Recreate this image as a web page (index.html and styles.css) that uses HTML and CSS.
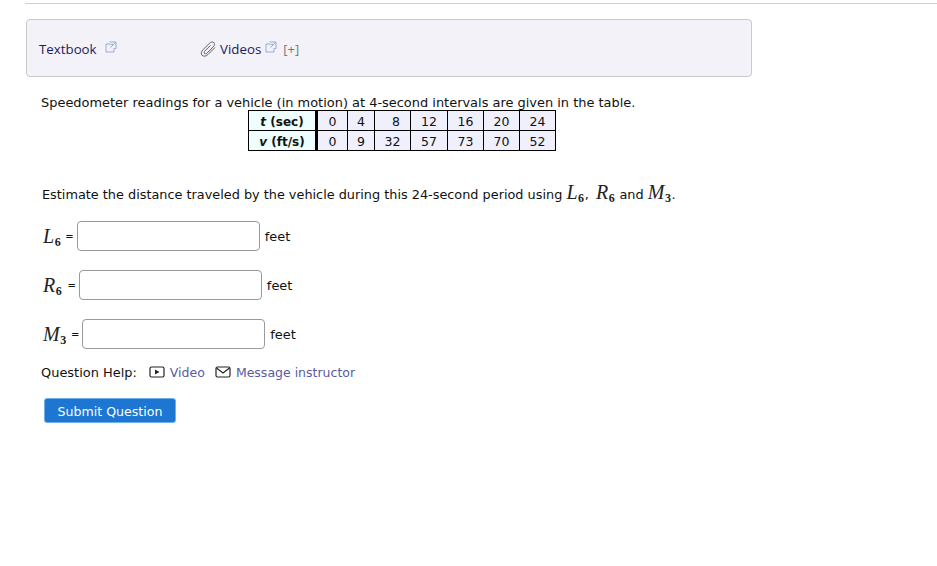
FILE: index.html
```html
<!DOCTYPE html>
<html lang="en">
<head>
<meta charset="utf-8">
<title>Question</title>
<link rel="stylesheet" href="styles.css">
</head>
<body>
<hr class="rule">
<div class="panel">
  <a class="res res-book" href="#">Textbook <svg class="ext" viewBox="0 0 12 12"><path d="M9 7v4H1V3h4M4.500 1H11v6.500H9.500M10.500 1.500L5.500 6.500M8 3.500H5.500"/></svg></a>
  <span class="res res-vid">
    <svg class="clip" viewBox="0 0 16 16"><path d="M15 6.500L8 13.500c-1.900 1.900-4.500 2.200-5.900.8S1.200 10.600 3 8.700L9.500 2.200c1.400-1.400 3.300-1.600 4.300-.6s.8 2.900-.6 4.300L7 12.100c-.8.800-1.900 1-2.500.4s-.4-1.700.4-2.500L10.500 4.400"/></svg>
    <a href="#">Videos</a>
    <svg class="ext" viewBox="0 0 12 12"><path d="M9 7v4H1V3h4M4.500 1H11v6.500H9.500M10.500 1.500L5.500 6.500M8 3.500H5.500"/></svg>
    <span class="plus">[+]</span>
  </span>
</div>
<p class="intro">Speedometer readings for a vehicle (in motion) at 4-second intervals are given in the table.</p>
<table class="data">
  <colgroup><col class="c-head"><col class="c-a"><col class="c-b"><col class="c-n"><col class="c-m"><col class="c-n"><col class="c-n"><col class="c-n"></colgroup>
  <tr><th><i>t</i> (sec)</th><td>0</td><td>4</td><td class="shift">8</td><td>12</td><td>16</td><td>20</td><td>24</td></tr>
  <tr><th><i>v</i> (ft/s)</th><td>0</td><td>9</td><td>32</td><td>57</td><td>73</td><td>70</td><td>52</td></tr>
</table>
<p class="estimate">Estimate the distance traveled by the vehicle during this 24-second period using <span class="m"><i>L</i><sub>6</sub></span>, <span class="m m-next"><i>R</i><sub>6</sub></span> and <span class="m"><i>M</i><sub>3</sub></span>.</p>
<div class="answer"><span class="m"><i>L</i><sub>6</sub></span><span class="eq">=</span><input class="box" type="text"><span>feet</span></div>
<div class="answer answer-r"><span class="m"><i>R</i><sub>6</sub></span><span class="eq">=</span><input class="box" type="text"><span>feet</span></div>
<div class="answer"><span class="m"><i>M</i><sub>3</sub></span><span class="eq">=</span><input class="box" type="text"><span>feet</span></div>
<div class="help">
  <span class="help-label">Question Help:</span>
  <svg class="ico" viewBox="0 0 16 12"><rect x="1" y="1" width="14" height="10" rx="1.500"/><path class="fill" d="M6 3.500L10.500 6 6 8.500z"/></svg>
  <a href="#">Video</a>
  <svg class="ico ico-mail" viewBox="0 0 16 12"><rect x="1" y="1" width="14" height="10" rx="1.500"/><path d="M1.500 2l6.500 5 6.500-5"/></svg>
  <a href="#">Message instructor</a>
</div>
<button class="submit" type="button">Submit Question</button>
</body>
</html>
```

FILE: styles.css
```css
html, body { margin: 0; padding: 0; background: #fff; }
body { font-family: "DejaVu Sans", sans-serif; font-size: 12.950px; color: #111; height: 566px; overflow: hidden; }
.rule { border: 0; border-top: 1px solid #d0d0d0; margin: 3px 0 0 25px; height: 0; }
.panel { display: flex; align-items: center; box-sizing: border-box; width: 726px; height: 58px; margin: 15px 0 0 26px; padding: 1px 0 0 12px; background: #f2f2f8; border: 1px solid #c9c9cf; border-radius: 4px; font-family: "Open Sans", sans-serif; font-size: 13.300px; }
.panel a { color: #1f1a5c; text-decoration: none; }
.res { display: flex; align-items: center; }
.res-book { width: 161px; gap: 8px; }
.res-vid { gap: 4px; }
.ext { width: 12px; height: 12px; margin-top: -4px; fill: none; stroke: #8fa3cc; stroke-width: .9; }
.clip { width: 16px; height: 16px; fill: none; stroke: #555; stroke-width: .9; }
.plus { color: #777; margin-left: 2px; font-size: 13px; }
.intro { margin: 18px 0 0 41px; line-height: 15px; }
.data { border-collapse: collapse; margin: 0 0 0 248px; table-layout: fixed; width: 308px; font-size: 12.500px; }
.data th, .data td { box-sizing: border-box; border: 1px solid #000; padding: 3px 0 0; height: 20px; line-height: 16px; text-align: center; background: #f0f0fd; font-weight: normal; }
.data tr + tr th, .data tr + tr td { padding-top: 2px; }
.data th { background: #eefdfd; font-weight: bold; font-size: 12px; border-right: 3px solid #000; }
.c-head { width: 68px; }
.c-a { width: 31px; }
.c-b { width: 27px; }
.c-n { width: 36px; }
.c-m { width: 37px; }
.data .shift { padding-left: 7px; }
.estimate { margin: 33px 0 0 42px; line-height: 16px; font-size: 12.850px; }
.m { font-family: "Liberation Serif", serif; font-size: 20px; letter-spacing: .6px; color: #222; }
.m-next { margin-left: 3px; }
.m sub { font-size: 12px; font-weight: bold; vertical-align: -3px; line-height: 0; font-style: normal; }
.answer { display: flex; align-items: center; height: 30px; margin: 19px 0 0 43px; gap: 3px; }
.estimate + .answer { margin-top: 18px; }
.eq { font-size: 10px; margin-left: 1px; }
.answer-r .eq { margin-left: 2px; }
.box { box-sizing: border-box; width: 183px; height: 30px; margin: 0; padding: 0; background: #fff; border: 1px solid #999; border-radius: 4px; }
.box + span { margin-left: 2px; }
.help { display: flex; align-items: center; margin: 15px 0 0 41px; height: 16px; }
.help a { color: #5a5aa0; text-decoration: none; font-size: 12.500px; }
.help-label { margin-right: 12px; }
.ico { width: 16px; height: 12px; margin-right: 5px; fill: none; stroke: #222; stroke-width: 1.200; }
.ico .fill { fill: #222; stroke: none; }
.ico-mail { margin-left: 10px; }
.submit { display: block; box-sizing: border-box; width: 132px; height: 25px; margin: 18px 0 0 44px; padding: 1px 0 0; background: #1c76d2; color: #fff; border: 1px solid #6fb0ea; border-radius: 3px; font-family: "DejaVu Sans", sans-serif; font-size: 12.600px; }
```
